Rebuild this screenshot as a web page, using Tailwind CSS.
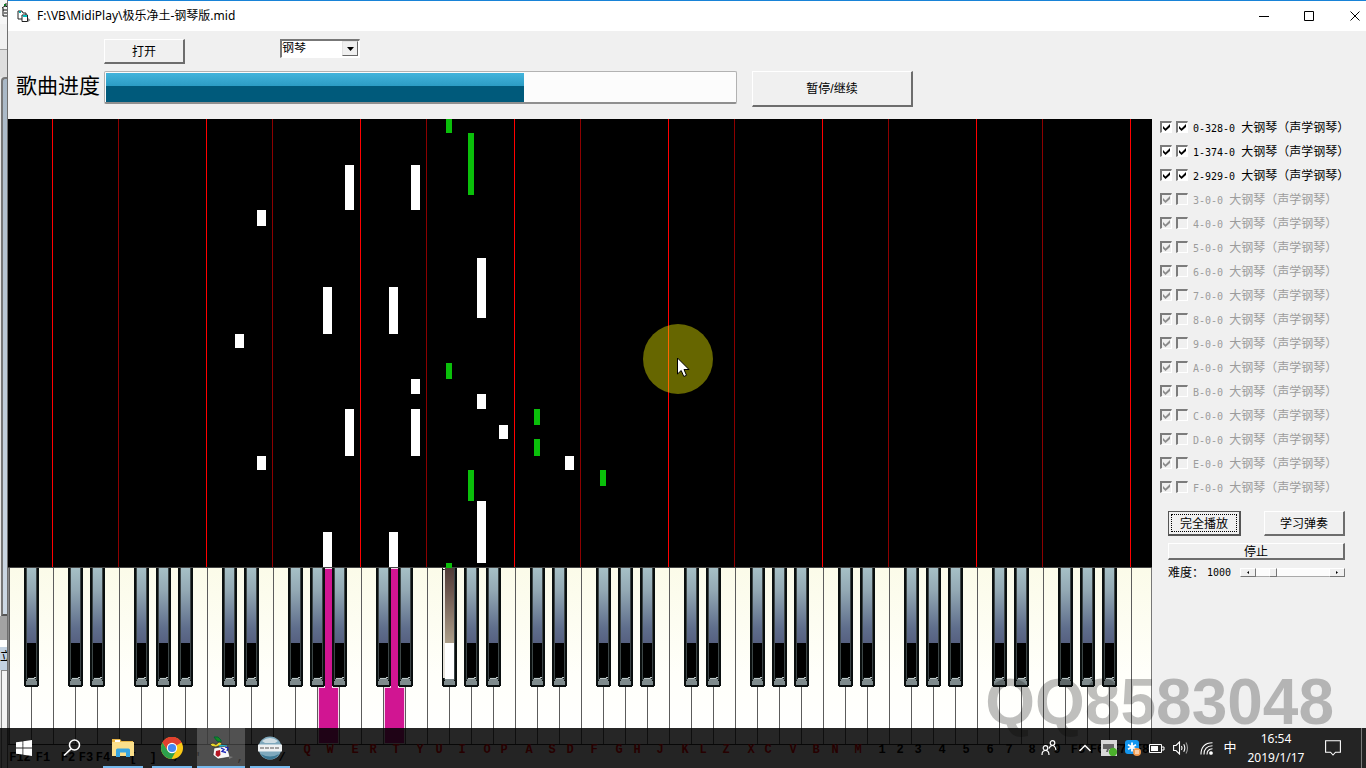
<!DOCTYPE html>
<html lang="zh-CN">
<head>
<meta charset="utf-8">
<title>MidiPlay</title>
<script src="https://cdn.jsdelivr.net/npm/@tailwindcss/browser@4"></script>
</head>
<body class="relative flex h-screen overflow-hidden bg-[#f0f0f0] font-['Liberation_Sans','Noto_Sans_CJK_SC',sans-serif] text-xs text-black">

<!-- Edge of the window behind -->
<aside class="flex w-2 shrink-0 flex-col overflow-hidden border-r border-[#6f6f6f] bg-[#e9e9e9]">
  <div class="h-6 shrink-0 bg-[#f6f6f6]">
    <svg class="h-5 w-2" viewBox="0 0 8 20" aria-hidden="true"><path d="M6 3v3M2 8l3-2 3 1M3 8v8M3 10h5M4 13h4M3 16h5" fill="none" stroke="#111"/><path d="M4 4h2v2H4z" fill="#0a7a20"/></svg>
  </div>
  <div class="h-[26px] shrink-0 border-b border-[#a0a0a0] bg-[#f0f0f0]"></div>
  <div class="h-[27px] shrink-0 bg-[#dedede]"></div>
  <div class="ml-px h-[539px] shrink-0 rounded-tl-sm border-2 border-r-0 border-[#777] border-b-[#555] bg-linear-to-b from-[#a9b8c6] to-[#cdd9e5]"></div>
  <div class="h-6 shrink-0 bg-[#a3a3a3]"></div>
  <div class="h-[7px] shrink-0 bg-white"></div>
  <div class="h-[23px] shrink-0 overflow-hidden bg-[#c3d2e2] pt-0.5 text-xs leading-4">立</div>
  <div class="ml-px flex-1 border-l border-t border-[#888] bg-[#f4f4f4]"></div>
</aside>

<main class="flex min-w-0 flex-1 flex-col border-t border-[#1883d7]">
  <!-- Title bar -->
  <header class="flex h-[30px] shrink-0 items-center bg-white pl-2">
    <svg class="h-4 w-4" viewBox="0 0 16 16" aria-hidden="true">
      <path d="M2 3h4l1 2h3v6H2z" fill="#fff" stroke="#222"/><path d="M3 4h2" stroke="#0aa" stroke-width="2"/>
      <path d="M6 7h5.500v6.500H6z" fill="#fff" stroke="#222"/><path d="M7 8h4" stroke="#0bb" stroke-width="2"/><path d="M12 10l2.500 2-2.500 2z" fill="#888"/>
    </svg>
    <h1 class="ml-[5px] flex-1 font-['Noto_Sans','Noto_Sans_CJK_SC',sans-serif] text-xs">F:\VB\MidiPlay\极乐净土-钢琴版.mid</h1>
    <button class="flex h-full w-[45px] items-center justify-center" aria-label="最小化"><svg class="h-[11px] w-[11px]" viewBox="0 0 11 11"><path d="M0 5.500h10" stroke="#000"/></svg></button>
    <button class="flex h-full w-[45px] items-center justify-center" aria-label="最大化"><svg class="h-[11px] w-[11px]" viewBox="0 0 11 11"><path d="M.5.500h9v9h-9z" fill="none" stroke="#000"/></svg></button>
    <button class="flex h-full w-[34px] items-center justify-end pr-[5px]" aria-label="关闭"><svg class="h-[11px] w-[11px]" viewBox="0 0 11 11"><path d="M.5.500l9 9M9.500.500l-9 9" stroke="#000"/></svg></button>
  </header>

  <!-- Toolbar -->
  <section class="h-[88px] shrink-0 pl-2 pt-2">
    <div class="flex items-start">
      <button class="ml-[88px] h-[25px] w-[81px] border border-b-2 border-r-2 border-b-[#6d6d6d] border-l-white border-r-[#6d6d6d] border-t-white pt-px text-xs">打开</button>
      <div class="relative ml-[95px] h-[19px] w-20">
        <select aria-label="乐器" class="h-full w-full appearance-none border border-l-2 border-t-2 border-b-white border-l-[#777] border-r-white border-t-[#777] bg-white pb-0.5 text-xs leading-none"><option>钢琴</option></select>
        <span class="pointer-events-none absolute right-0.5 top-0.5 flex h-[15px] w-4 items-center justify-center border border-b-[#666] border-l-[#e3e3e3] border-r-[#666] border-t-[#e3e3e3] bg-[#f0f0f0]">
          <svg class="h-1 w-[7px]" viewBox="0 0 7 4"><path d="M0 0h7L3.500 4z"/></svg>
        </span>
      </div>
    </div>
    <div class="mt-[7px] flex items-start">
      <span class="w-[88px] text-[21px] leading-[29px]">歌曲进度</span>
      <div role="progressbar" aria-label="歌曲进度" aria-valuenow="66" class="h-[33px] w-[633px] rounded-xs border border-b-2 border-[#b2b2b2] border-b-[#8f8f8f] bg-[#fcfcfc] pl-px pt-px">
        <div class="h-[29px] bg-linear-to-b from-[#42b4dc] from-0% via-[#2b9cc4] via-45% to-[#005a7b] to-45%" style="width:66.3%"></div>
      </div>
      <button class="ml-[15px] h-9 w-[161px] border border-b-2 border-r-2 border-b-[#6d6d6d] border-l-white border-r-[#6d6d6d] border-t-white text-xs">暂停/继续</button>
    </div>
  </section>

  <div class="flex min-h-0 flex-1">
    <!-- Falling notes and keyboard -->
    <div class="min-w-0 flex-1">
      <svg class="block h-full w-full" viewBox="8 119 1144 649" preserveAspectRatio="xMinYMin slice" shape-rendering="crispEdges" role="img" aria-label="钢琴卷帘">
        <defs>
          <linearGradient id="steel" x1="0" y1="0" x2="0" y2="1"><stop offset="0" stop-color="#a6c0c6"/><stop offset=".3" stop-color="#93a9b4"/><stop offset=".8" stop-color="#5f6e8c"/><stop offset="1" stop-color="#566080"/></linearGradient>
          <linearGradient id="bronze" x1="0" y1="0" x2="0" y2="1"><stop offset="0" stop-color="#503c38"/><stop offset=".3" stop-color="#6b554d"/><stop offset="1" stop-color="#ad9f8a"/></linearGradient>
          <linearGradient id="ivory" x1="0" y1="0" x2="0" y2="1"><stop offset="0" stop-color="#fbfbe9"/><stop offset=".6" stop-color="#fffffa"/><stop offset="1" stop-color="#fff"/></linearGradient>
          <pattern id="white" x="10" y="568" width="22" height="176" patternUnits="userSpaceOnUse"><rect x="21" width="1" height="176" fill="#5c5c5c"/></pattern>
          <g id="key">
            <path d="M0 0h15v118h-1v1H1v-1H0z" fill="#0a0f0f"/>
            <rect x="2" width="1" height="112" fill="#3c4546"/><rect x="12" width="1" height="112" fill="#3c4546"/>
            <rect x="3" width="9" height="75" fill="url(#steel)"/>
            <rect x="3" y="75" width="9" height="34" fill="#000"/>
            <path d="M2 117v-4h1v-2h1v-1h7v1h1v2h1v4z" fill="#7f8b8d"/><path d="M4 110h6v1H4zM10 109h2v1h-2z" fill="#bcc5c5"/>
          </g>
          <g id="octave"><use href="#key"/><use href="#key" x="22"/><use href="#key" x="66"/><use href="#key" x="88"/><use href="#key" x="110"/></g>
        </defs>
        <rect x="8" y="119" width="1144" height="449"/>
        <path d="M52.500 119v449M206.500 119v449M360.500 119v449M514.500 119v449M668.500 119v449M822.500 119v449M976.500 119v449M1130.500 119v449" stroke="#f00"/>
        <path d="M118.500 119v449M272.500 119v449M426.500 119v449M580.500 119v449M734.500 119v449M888.500 119v449M1042.500 119v449" stroke="#8c0000"/>
        <g fill="#0abf0a">
          <rect x="446" y="119" width="6" height="14"/><rect x="468" y="133" width="6" height="62"/><rect x="446" y="363" width="6" height="16"/><rect x="534" y="409" width="6" height="16"/><rect x="534" y="439" width="6" height="17"/><rect x="468" y="470" width="6" height="31"/><rect x="600" y="470" width="6" height="16"/>
        </g>
        <g fill="#fff">
          <rect x="345" y="165" width="9" height="45"/><rect x="411" y="165" width="9" height="45"/><rect x="257" y="210" width="9" height="16"/><rect x="477" y="258" width="9" height="60"/><rect x="323" y="287" width="9" height="47"/><rect x="389" y="287" width="9" height="47"/><rect x="235" y="334" width="9" height="14"/><rect x="411" y="379" width="9" height="15"/><rect x="477" y="394" width="9" height="15"/><rect x="345" y="409" width="9" height="47"/><rect x="411" y="409" width="9" height="47"/><rect x="499" y="425" width="9" height="14"/><rect x="257" y="456" width="9" height="14"/><rect x="565" y="456" width="9" height="14"/><rect x="477" y="501" width="9" height="62"/><rect x="323" y="532" width="9" height="36"/><rect x="389" y="532" width="9" height="36"/>
        </g>
        <rect x="8" y="568" width="1144" height="200" fill="#f0f0f0"/>
        <rect x="9" y="568" width="1143" height="176" fill="url(#ivory)"/>
        <rect x="9" y="568" width="1143" height="176" fill="url(#white)"/>
        <path d="M8 567.500h1144" stroke="#444"/><path d="M8 744.500h1144" stroke="#333"/><path d="M8.500 568v176" stroke="#888"/><path d="M1151.500 568v176" stroke="#777"/>
        <rect x="446" y="563" width="6" height="5" fill="#0abf0a"/>
        <g fill="#d11592" stroke="#f6d6ea">
          <path d="M324.500 568v119.500h-6V743.500h20V687.500h-6V568z"/><path d="M390.500 568v119.500h-6V743.500h20V687.500h-6V568z"/>
        </g>
        <use href="#key" x="24" y="568"/>
        <use href="#octave" x="68" y="568"/><use href="#octave" x="222" y="568"/><use href="#octave" x="376" y="568"/><use href="#octave" x="530" y="568"/><use href="#octave" x="684" y="568"/><use href="#octave" x="838" y="568"/><use href="#octave" x="992" y="568"/>
        <use href="#key" x="288" y="568"/>
        <rect x="443" y="568" width="2" height="1" fill="#fffff4"/>
        <rect x="443" y="570" width="2" height="108" fill="#e8e4dc"/>
        <rect x="445" y="568" width="9" height="75" fill="url(#bronze)"/><rect x="445" y="643" width="9" height="36" fill="#fff"/>
        <g font-family="Liberation Mono, monospace" font-size="12" font-weight="bold" text-anchor="middle">
          <g id="letters" fill="#ff0000"></g><g id="digits" fill="#000"></g>
        </g>
      </svg>
    </div>

    <!-- Channels and playback -->
    <aside class="w-[214px] shrink-0 pl-2">
      <ul id="channels" class="flex flex-col gap-2"></ul>
      <div class="mt-4 flex justify-between pl-2 pr-[21px]">
        <button class="h-[25px] w-[73px] border border-b-2 border-r-2 border-[#555] p-0.5 text-xs"><span class="flex h-full items-center justify-center border border-dotted border-black pt-px">完全播放</span></button>
        <button class="h-[25px] w-[81px] border border-b-2 border-r-2 border-b-[#6d6d6d] border-l-white border-r-[#6d6d6d] border-t-white pt-px text-xs">学习弹奏</button>
      </div>
      <div class="mt-[7px] pl-2 pr-[21px]">
        <button class="flex h-[17px] w-full items-center justify-center border border-b-2 border-r-2 border-b-[#6d6d6d] border-l-white border-r-[#6d6d6d] border-t-white pt-0.5 text-xs leading-none">停止</button>
      </div>
      <div class="mt-1 flex h-4 items-center pl-2 pr-[21px]">
        <label for="level" class="w-[39px] whitespace-nowrap pt-0.5 text-xs">难度：</label>
        <output for="level" class="w-[33px] pt-0.5 font-['DejaVu_Sans_Mono',monospace] text-[10px]">1000</output>
        <button class="flex h-[9px] w-4 items-center justify-center border border-b-[#777] border-l-white border-r-[#777] border-t-white" aria-label="减"><svg class="h-[3px] w-0.5" viewBox="0 0 2 3"><path d="M2 0v3L0 1.500z"/></svg></button>
        <input id="level" type="range" min="0" max="5000" value="1000" class="h-[9px] min-w-0 flex-1 appearance-none border-t border-b border-t-white border-b-[#aaa] bg-[#fcfcfc] [&::-webkit-slider-thumb]:h-[9px] [&::-webkit-slider-thumb]:w-2 [&::-webkit-slider-thumb]:appearance-none [&::-webkit-slider-thumb]:border [&::-webkit-slider-thumb]:border-t-white [&::-webkit-slider-thumb]:border-l-white [&::-webkit-slider-thumb]:border-r-[#777] [&::-webkit-slider-thumb]:border-b-[#777] [&::-webkit-slider-thumb]:bg-[#f0f0f0]">
        <button class="flex h-[9px] w-4 items-center justify-center border border-b-[#777] border-l-white border-r-[#777] border-t-white" aria-label="加"><svg class="h-[3px] w-0.5" viewBox="0 0 2 3"><path d="M0 0v3l2-1.500z"/></svg></button>
      </div>
    </aside>
  </div>
</main>

<!-- Pointer with its highlight -->
<div class="pointer-events-none absolute left-[643px] top-[324px] h-[70px] w-[70px] rounded-full bg-[#ffff00]/40"></div>
<svg class="pointer-events-none absolute left-[677px] top-[357px] h-[21px] w-[13px]" viewBox="0 0 13 21" aria-hidden="true"><path d="M.5 1v16l3.700-3.500 2.600 6 2.700-1.200-2.500-5.800h5z" fill="#fff" stroke="#000"/></svg>

<div class="pointer-events-none absolute bottom-[38px] right-8 text-[64px] font-bold leading-[56px] text-black/25">QQ8583048</div>

<!-- Taskbar -->
<footer class="absolute inset-x-0 bottom-0 flex h-10 justify-between bg-black/85 text-white">
  <nav class="flex gap-px">
    <button class="flex w-12 items-center justify-center" aria-label="开始"><svg class="h-4 w-4" viewBox="0 0 16 16" fill="#fff"><path d="M0 2.300l6.500-.9v6.200H0zM7.300 1.300L16 0v7.600H7.300zM0 8.400h6.500v6.200L0 13.700zM7.300 8.400H16V16l-8.700-1.300z"/></svg></button>
    <button class="flex w-[46px] items-center justify-center" aria-label="搜索"><svg class="h-[18px] w-[18px]" viewBox="0 0 18 18" fill="none" stroke="#fff" stroke-width="1.600"><circle cx="11.500" cy="6" r="5"/><path d="M8 9.800L1 16.500"/></svg></button>
    <button class="relative ml-[3px] flex w-12 items-center justify-center" aria-label="文件资源管理器">
      <svg class="h-5 w-[22px]" viewBox="0 0 22 20"><path d="M0 1h8l1.500 2H21v4H0z" fill="#e8b647"/><path d="M3 2h5v2H3z" fill="#fff"/><path d="M0 4h22v14H0z" fill="#fbdf8a"/><path d="M4 19v-7q0-1.500 1.500-1.500h11q1.500 0 1.500 1.500v7h-4v-4.500H8V19z" fill="#38a5e0"/></svg>
      <span class="absolute inset-x-1 bottom-0 h-0.5 bg-[#76b9ed]"></span>
    </button>
    <button class="relative flex w-12 items-center justify-center" aria-label="Chrome">
      <svg class="h-[22px] w-[22px]" viewBox="0 0 22 22"><circle cx="11" cy="11" r="11" fill="#fbc916"/><path d="M11 11L1.500 5.500A11 11 0 0 1 20.500 5.500z" fill="#e2412f"/><path d="M1.500 5.500A11 11 0 0 0 10.500 22L15.300 13.500 6.700 13.500z" fill="#2da14c"/><path d="M11 6h9.800a11 11 0 0 0-19.300-.5L6.700 13.500z" fill="#e2412f"/><circle cx="11" cy="11" r="5.200" fill="#fff"/><circle cx="11" cy="11" r="4.100" fill="#4688f1"/></svg>
      <span class="absolute inset-x-1 bottom-0 h-0.5 bg-[#76b9ed]"></span>
    </button>
    <button class="relative flex w-12 items-center justify-center bg-white/20" aria-label="MidiPlay">
      <svg class="h-6 w-6" viewBox="0 0 24 24"><path d="M5 1h4l3 3v2L8 5z" fill="#178a22" stroke="#063"/><path d="M1 8l3-1 3 1.500L10 6l3 1-1 2-5 2-4-.5z" fill="#e8d62a" stroke="#333" stroke-width=".8"/><path d="M10 9h8v4h-7z" fill="#25b4c8"/><path d="M5 12l13-2 3 11-12 2-5-4z" fill="#f7f7f7" stroke="#222" stroke-width=".6"/><path d="M12 12l3 1.500-2 2 4 1M16 11l3 1-1 3" fill="none" stroke="#1a24b8" stroke-width="1.300"/><path d="M7 15l4-1 .5 5-2.500 2-2.500-2z" fill="#b51624"/><path d="M20 20l4 1-4 2z" fill="#777"/></svg>
      <span class="absolute inset-x-0 bottom-0 h-0.5 bg-[#76b9ed]"></span>
    </button>
    <button class="relative flex w-12 items-center justify-center" aria-label="浏览器">
      <svg class="h-6 w-6" viewBox="0 0 24 24"><circle cx="12" cy="12" r="11.500" fill="#7fa9bd"/><path d="M4 5q8-6 16 0l-3 2H7z" fill="#cfdde3"/><path d="M3 18q9 5 18 0-3 5-9 5.500Q6 23 3 18z" fill="#3d7894"/><path d="M0 8.500h24v7H0z" fill="#eef1f2"/><path d="M2 12h2M5 11v2M7 12h2M10 11v2M12 12h2M15 11v2M17 12h2M20 11v2" stroke="#555"/></svg>
      <span class="absolute inset-x-1 bottom-0 h-0.5 bg-[#76b9ed]"></span>
    </button>
  </nav>
  <div class="flex items-center">
    <button class="flex w-[42px] justify-center pr-1.5" aria-label="人脉"><svg class="h-4 w-4" viewBox="0 0 16 16" fill="none" stroke="#fff" stroke-width="1.200"><circle cx="11.500" cy="3" r="2.300"/><circle cx="4.500" cy="8" r="2.300"/><path d="M1 15q0-4.500 3.500-4.500T8 15M8 8.500q1-3 3.500-3T15 10"/></svg></button>
    <button class="flex w-6 justify-center" aria-label="显示隐藏的图标"><svg class="h-2 w-3" viewBox="0 0 12 8" fill="none" stroke="#fff" stroke-width="1.400"><path d="M.5 7L6 1.500 11.500 7"/></svg></button>
    <button class="flex w-6 justify-center" aria-label="显卡"><svg class="h-4 w-4" viewBox="0 0 16 16"><path d="M0 0h16v16H0z" fill="#d8d8d8"/><path d="M2 4h11v5H8l-1 3H5l1-3H2z" fill="#666"/><circle cx="12" cy="12" r="4.200" fill="#4cb02c"/></svg></button>
    <button class="flex w-6 justify-center" aria-label="助手"><svg class="h-4 w-4" viewBox="0 0 16 16"><rect width="14" height="14" rx="3" fill="#1496ee"/><path d="M7 2.500v9M3 4.800l8 4.400M11 4.800L3 9.200" stroke="#fff" stroke-width="1.800"/><circle cx="12" cy="12" r="4" fill="#f49a4d"/><path d="M10 11h4M10 13h4" stroke="#fff"/></svg></button>
    <button class="flex w-6 justify-center" aria-label="电池"><svg class="h-[9px] w-4" viewBox="0 0 16 9"><path d="M.5.500h12v8H.5zM13 3h2v3h-2" fill="none" stroke="#fff"/><path d="M2 2h7v5H2z" fill="#fff"/></svg></button>
    <button class="flex w-6 justify-center" aria-label="音量"><svg class="h-[14px] w-[17px]" viewBox="0 0 17 14" fill="none" stroke="#fff" stroke-width="1.100"><path d="M.6 4.500h2.400L6.500 1v12L3 9.500H.6z"/><path d="M8.500 5q1 2 0 4M10.700 3.200q2.200 3.800 0 7.600"/><path d="M13 1.500q3 5.500 0 11" stroke="#999"/></svg></button>
    <button class="flex w-[26px] justify-center" aria-label="网络"><svg class="h-[13px] w-[13px]" viewBox="0 0 13 13" fill="none" stroke="#fff" stroke-width="1.100"><path d="M1 12.500Q1 1 12.500.800M4 12.500Q4 4 12.500 3.800M7 12.500Q7 7 12.500 6.800"/><circle cx="11" cy="11" r="1.300" fill="#fff"/></svg></button>
    <button class="w-[22px] text-center text-[13px]">中</button>
    <time class="w-[70px] text-center font-['Noto_Sans',sans-serif] text-xs leading-[19px]">16:54<br>2019/1/17</time>
    <button class="flex w-11 justify-center" aria-label="通知"><svg class="h-4 w-4" viewBox="0 0 16 16" fill="none" stroke="#fff" stroke-width="1.100"><path d="M.6.800h14.800v11.400H10.500L8 15l-2.500-2.800H.6z"/></svg></button>
    <span class="ml-1.5 mr-1 h-10 w-px bg-white/40"></span>
  </div>
</footer>

<script>
  const list = document.getElementById('channels');
  const counts = { 0: 328, 1: 374, 2: 929 };
  const box = (label, checked, off) => `
    <span class="relative h-3 w-3">
      <input type="checkbox" aria-label="${label}" ${checked ? 'checked' : ''} ${off ? 'disabled' : ''} class="peer block h-3 w-3 appearance-none border border-l-2 border-t-2 border-b-white border-l-[#7c7c7c] border-r-white border-t-[#7c7c7c] bg-white disabled:bg-[#f0f0f0]">
      <svg class="pointer-events-none absolute left-[3px] top-[3px] hidden h-[7px] w-[7px] text-black peer-checked:block peer-disabled:text-[#8c8c8c]" viewBox="0 0 7 7"><path d="M0 2l2.500 2.500L7 0v3L2.500 7 0 4.500z" fill="currentColor"/></svg>
    </span>`;
  for (let i = 0; i < 16; i++) {
    const id = i.toString(16).toUpperCase(), off = i > 2;
    const li = document.createElement('li');
    li.className = 'flex h-4 items-center gap-1';
    li.innerHTML = box('显示 ' + id, true, off) + box('播放 ' + id, !off, off) +
      `<span class="${off ? 'whitespace-pre pl-px pt-0.5 leading-4 text-[#9c9c9c]' : 'whitespace-pre pl-px pt-0.5 leading-4'}"><span class="font-['DejaVu_Sans_Mono',monospace] text-[10px]">${id}-${counts[i] || 0}-0 </span>大钢琴（声学钢琴）</span>`;
    list.append(li);
  }

  const put = (group, y, items) => {
    for (const [t, x] of items) {
      const el = document.createElementNS('http://www.w3.org/2000/svg', 'text');
      el.setAttribute('x', x); el.setAttribute('y', y); el.textContent = t;
      document.getElementById(group).append(el);
    }
  };
  put('letters', 753, [['Q',307],['W',330],['E',355],['R',373],['T',396],['Y',420],['U',439],['I',462],['O',487],['P',504],['A',529],['S',552],['D',570],['F',594],['G',619],['H',637],['J',660],['K',685],['L',703],['Z',726],['X',751],['C',768],['V',793],['B',816],['N',835],['M',858]]);
  put('digits', 753, [['1',882],['2',900],['3',918],['4',942],['5',966],['6',990],['7',1009],['8',1032],['9',1057],['F5',1078],['F6',1097],['F7',1119],['F8',1142]]);
  put('digits', 761, [['F12',20],['F1',43],['F2',68],['F3',86],['F4',103],['[',133],[']',153],['/',177],["'",198],[',',240],['/',282]]);
</script>
</body>
</html>
